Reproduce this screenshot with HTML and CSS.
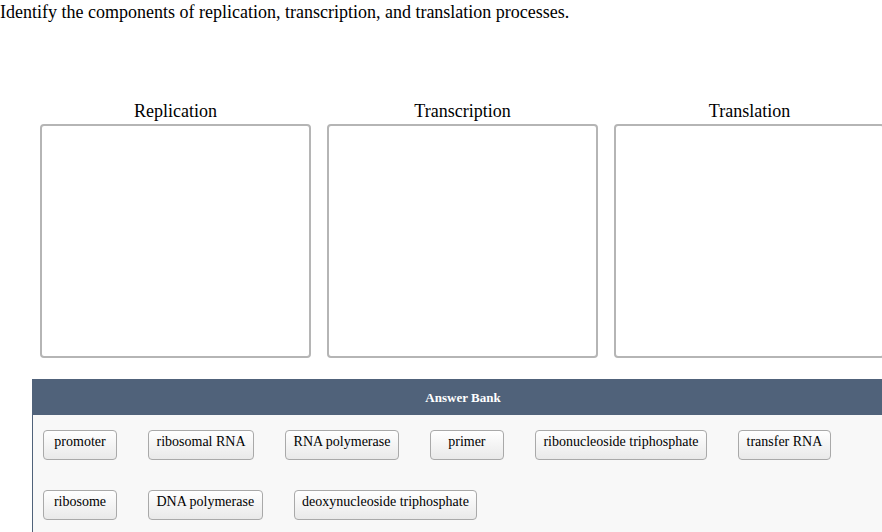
FILE: index.html
```html
<!DOCTYPE html>
<html lang="en">
<head>
<meta charset="utf-8">
<title>Replication, transcription, translation</title>
<link rel="stylesheet" href="styles.css">
</head>
<body>
<p class="prompt">Identify the components of replication, transcription, and translation processes.</p>
<div class="targets">
  <div class="col">
    <div class="col-label">Replication</div>
    <div class="dropbox"></div>
  </div>
  <div class="col">
    <div class="col-label">Transcription</div>
    <div class="dropbox"></div>
  </div>
  <div class="col">
    <div class="col-label">Translation</div>
    <div class="dropbox"></div>
  </div>
</div>
<div class="bank">
  <div class="bank-head">Answer Bank</div>
  <div class="bank-items">
    <span class="chip">promoter</span>
    <span class="chip">ribosomal RNA</span>
    <span class="chip">RNA polymerase</span>
    <span class="chip">primer</span>
    <span class="chip">ribonucleoside triphosphate</span>
    <span class="chip">transfer RNA</span>
    <span class="chip">ribosome</span>
    <span class="chip">DNA polymerase</span>
    <span class="chip">deoxynucleoside triphosphate</span>
  </div>
</div>
</body>
</html>
```
FILE: styles.css
```css
html, body {
  margin: 0;
  padding: 0;
  overflow: hidden;
  background: #ffffff;
}
body {
  font-family: "Liberation Serif", "Times New Roman", serif;
  color: #000;
  width: 900px;
}
.prompt {
  margin: 0;
  padding-top: 2px;
  font-size: 18px;
  line-height: 21px;
}
.targets {
  display: flex;
  gap: 16px;
  margin: 78px 0 0 40px;
}
.col {
  display: flex;
  flex-direction: column;
  width: 271px;
}
.col-label {
  text-align: center;
  font-size: 18px;
  line-height: 21px;
}
.dropbox {
  margin-top: 2px;
  height: 234px;
  box-sizing: border-box;
  border: 2px solid #b5b5b5;
  border-radius: 4px;
  background: #fff;
}
.bank {
  margin: 21px 0 0 32px;
  width: 862px;
  box-sizing: border-box;
  border: 1px solid #50627a;
  background: #f8f8f8;
  padding-bottom: 20px;
}
.bank-head {
  height: 35px;
  background: #50627a;
  color: #fff;
  font-weight: bold;
  font-size: 13px;
  display: flex;
  align-items: center;
  justify-content: center;
}
.bank-items {
  display: flex;
  flex-wrap: wrap;
  column-gap: 31px;
  row-gap: 30px;
  padding: 15px 10px 0 10px;
}
.chip {
  box-sizing: border-box;
  height: 30px;
  min-width: 74px;
  padding: 3px 7.5px 0 7.5px;
  border: 1px solid #a9a9a9;
  border-radius: 4px;
  background: linear-gradient(#ffffff, #e9e9e9);
  font-size: 14px;
  line-height: 16px;
  text-align: center;
  white-space: nowrap;
  color: #000;
}
```
